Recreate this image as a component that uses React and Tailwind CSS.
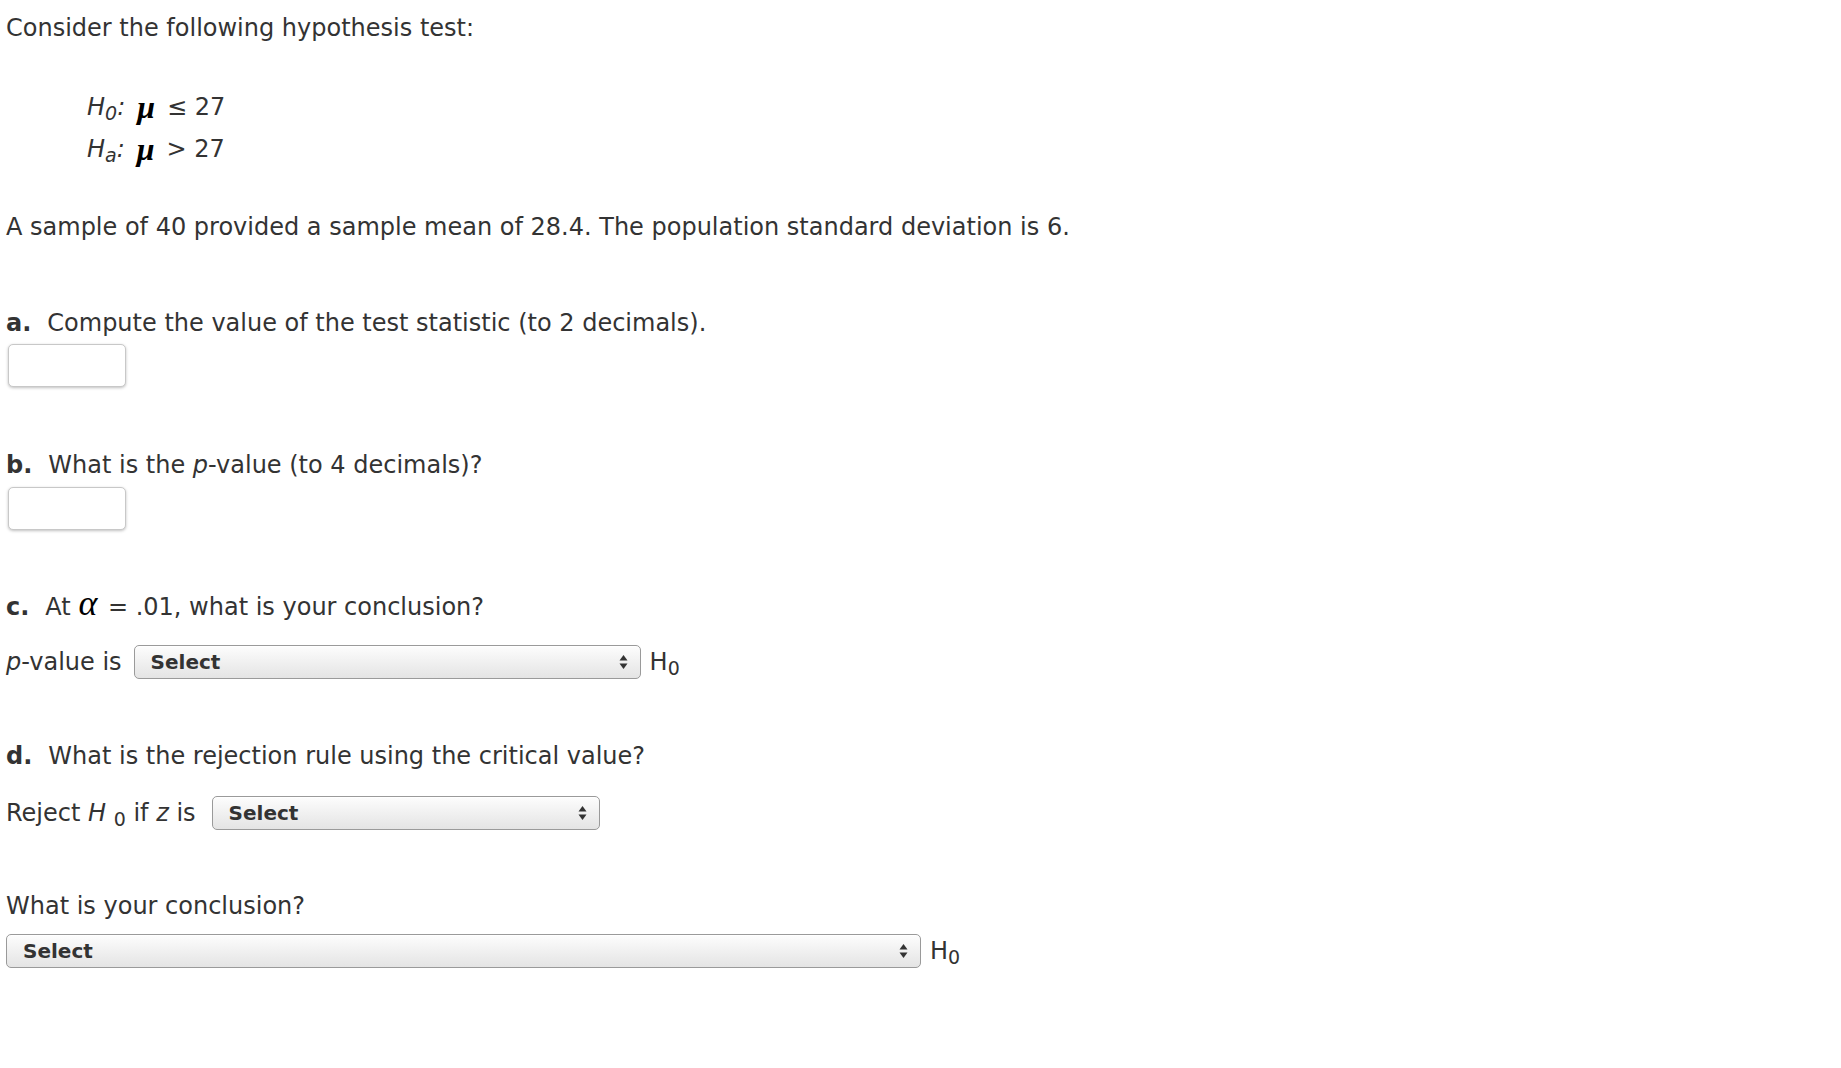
import React from "react";

function Sub({ children, italic }) {
  return (
    <span className={`relative top-[5px] text-[19px] ${italic ? "italic" : ""}`}>
      {children}
    </span>
  );
}

function Mu() {
  return (
    <span className="font-['Liberation_Serif',serif] italic font-bold text-[32px] leading-none text-black">μ</span>
  );
}

function Label({ children }) {
  return <b className="mr-[16px]">{children}</b>;
}

function FakeSelect({ width }) {
  return (
    <div
      className={`${width} h-[34px] flex items-center justify-between pl-[16px] pr-[12px] rounded-[5px] border border-[#9a9a9a] bg-gradient-to-b from-[#fdfdfd] to-[#e4e4e4] shadow-[inset_0_1px_0_#fff]`}
    >
      <span className="text-[20px] font-bold text-[#333] leading-none">Select</span>
      <svg width="9" height="18" viewBox="0 0 9 18" className="text-[#333]">
        <path d="M4.5 2 L8.5 7.5 L0.5 7.5 Z" fill="currentColor" />
        <path d="M4.5 16 L8.5 10.5 L0.5 10.5 Z" fill="currentColor" />
      </svg>
    </div>
  );
}

function AnswerBox() {
  return (
    <div className="w-[118px] h-[43px] ml-[2px] rounded-[5px] border border-[#c8c8c8] bg-white shadow-[0_1px_3px_rgba(0,0,0,0.25)]" />
  );
}

export default function App() {
  return (
    <div className="min-h-screen bg-white text-[#333] font-['DejaVu_Sans',Verdana,sans-serif] text-[24px] leading-[30px] pl-[6px] pt-[13px]">
      <p>Consider the following hypothesis test:</p>

      {/* hypotheses */}
      <div className="mt-[43px] pl-[81px]">
        <div className="h-[42px] flex items-center gap-[12px]">
          <span className="italic">
            H<Sub italic>0</Sub>:
          </span>
          <Mu />
          <span>≤ 27</span>
        </div>
        <div className="h-[42px] flex items-center gap-[12px]">
          <span className="italic">
            H<Sub italic>a</Sub>:
          </span>
          <Mu />
          <span>&gt; 27</span>
        </div>
      </div>

      <p className="mt-[42px]">
        A sample of 40 provided a sample mean of 28.4. The population standard deviation is 6.
      </p>

      {/* a */}
      <p className="mt-[66px]">
        <Label>a.</Label>Compute the value of the test statistic (to 2 decimals).
      </p>
      <div className="mt-[6px]">
        <AnswerBox />
      </div>

      {/* b */}
      <p className="mt-[63px]">
        <Label>b.</Label>What is the <i>p</i>-value (to 4 decimals)?
      </p>
      <div className="mt-[7px]">
        <AnswerBox />
      </div>

      {/* c */}
      <p className="mt-[62px]">
        <Label>c.</Label>At{" "}
        <span className="font-['Liberation_Serif',serif] italic text-[36px] leading-[0] text-black mr-[3px]">α</span>
        {" "}= .01, what is your conclusion?
      </p>
      <div className="mt-[23px] flex items-center">
        <span>
          <i>p</i>-value is
        </span>
        <div className="ml-[12px]">
          <FakeSelect width="w-[507px]" />
        </div>
        <span className="ml-[9px]">
          H<Sub>0</Sub>
        </span>
      </div>

      {/* d */}
      <p className="mt-[62px]">
        <Label>d.</Label>What is the rejection rule using the critical value?
      </p>
      <div className="mt-[25px] flex items-center">
        <span>
          Reject <i>H</i> <Sub>0</Sub> if <i>z</i> is
        </span>
        <div className="ml-[16px]">
          <FakeSelect width="w-[388px]" />
        </div>
      </div>

      <p className="mt-[61px]">What is your conclusion?</p>
      <div className="mt-[13px] flex items-center">
        <FakeSelect width="w-[915px]" />
        <span className="ml-[9px]">
          H<Sub>0</Sub>
        </span>
      </div>
    </div>
  );
}
